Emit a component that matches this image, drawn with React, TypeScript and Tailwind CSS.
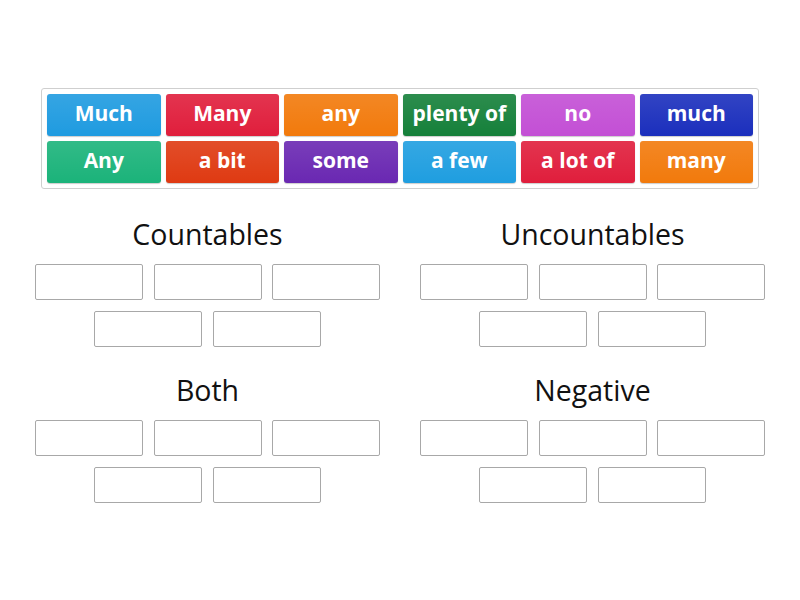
const tiles = [
  { label: "Much", color: "bg-[#1f9be0]" },
  { label: "Many", color: "bg-[#e01e3c]" },
  { label: "any", color: "bg-[#f27a0c]" },
  { label: "plenty of", color: "bg-[#15803a]" },
  { label: "no", color: "bg-[#c34fd5]" },
  { label: "much", color: "bg-[#1b2fbd]" },
  { label: "Any", color: "bg-[#1bb37a]" },
  { label: "a bit", color: "bg-[#df3a12]" },
  { label: "some", color: "bg-[#6a28b2]" },
  { label: "a few", color: "bg-[#1f9ee0]" },
  { label: "a lot of", color: "bg-[#e01e3c]" },
  { label: "many", color: "bg-[#f27a0c]" },
];

const groups = ["Countables", "Uncountables", "Both", "Negative"];

const DropBox = () => (
  <div className="w-[108px] h-[36px] border border-[#a8a8a8] rounded-[2px] bg-white"></div>
);

const App = () => {
  return (
    <div
      className="w-[800px] h-[600px] bg-white pt-[88px]"
      style={{ fontFamily: '"Open Sans", sans-serif' }}
    >
      {/* word tiles */}
      <div className="mx-auto w-[718px] border border-[#cfcfcf] rounded-[3px] p-[5px] grid grid-cols-6 gap-[5px]">
        {tiles.map(({ label, color }, i) => (
          <div
            key={i}
            className={`${color} h-[42px] rounded-[3px] flex items-center justify-center text-white font-bold text-[21px] shadow-[0_1px_1px_rgba(0,0,0,0.2)] bg-linear-to-b from-white/10 to-transparent`}
          >
            <span className="leading-none pb-[4px]">{label}</span>
          </div>
        ))}
      </div>

      {/* groups */}
      <div className="mt-[24px] px-[35px] grid grid-cols-2 gap-x-[40px] gap-y-[22px]">
        {groups.map((title) => (
          <div key={title} className="flex flex-col items-center">
            <h2 className="text-[28.5px] leading-[42px] text-[#111] mb-[9px]">
              {title}
            </h2>
            <div className="flex flex-wrap justify-center gap-x-[10.5px] gap-y-[11px] w-[345px]">
              <DropBox />
              <DropBox />
              <DropBox />
              <DropBox />
              <DropBox />
            </div>
          </div>
        ))}
      </div>
    </div>
  );
};

export default App;
